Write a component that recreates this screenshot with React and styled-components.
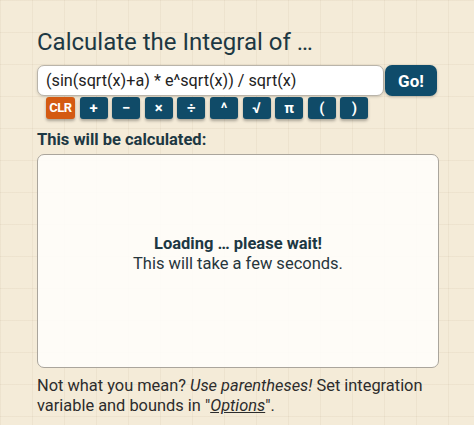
import React from 'react';
import styled, { createGlobalStyle } from 'styled-components';

const GlobalStyle = createGlobalStyle`
  html, body {
    margin: 0;
    padding: 0;
  }
  body {
    background-color: #f4ebd8;
    background-image:
      linear-gradient(rgba(120, 100, 60, 0.06) 1px, transparent 1px),
      linear-gradient(90deg, rgba(120, 100, 60, 0.06) 1px, transparent 1px);
    background-size: 32px 32px;
    font-family: Roboto, "Liberation Sans", sans-serif;
    color: #1d3843;
  }
`;

const Page = styled.div`
  width: 474px;
  height: 425px;
  box-sizing: border-box;
  padding: 28px 35px 0 37px;
  overflow: hidden;
`;

const Title = styled.h1`
  margin: 0 0 8px;
  font-size: 24px;
  font-weight: 400;
  line-height: 29px;
  color: #1d3843;
`;

const InputRow = styled.div`
  display: flex;
  gap: 1px;
`;

const FormulaInput = styled.div`
  flex: none;
  width: 347px;
  height: 31px;
  box-sizing: border-box;
  display: flex;
  align-items: center;
  padding: 0 8px;
  background: #fff;
  border: 1px solid #b9b4aa;
  border-radius: 7px;
  box-shadow: 0 1px 3px rgba(0, 0, 0, 0.15);
  font-size: 16.2px;
  color: #222;
`;

const GoButton = styled.button`
  width: 52px;
  height: 31px;
  border: none;
  border-radius: 7px;
  background: #0f4c6b;
  color: #fff;
  font-family: inherit;
  font-size: 17px;
  font-weight: 700;
  box-shadow: 0 1px 3px rgba(0, 0, 0, 0.25);
  padding: 0;
`;

const KeyRow = styled.div`
  display: flex;
  gap: 4.6px;
  margin: 1px 0 0 9px;
`;

const Key = styled.button`
  width: ${p => (p.$wide ? 29 : 28)}px;
  height: 22px;
  padding: 0;
  border: none;
  border-radius: 3px;
  background: ${p => (p.$danger ? '#d45a12' : '#104b68')};
  color: #fff;
  font-family: inherit;
  font-size: ${p => (p.$wide ? 13 : 15)}px;
  font-weight: 700;
  line-height: 22px;
  letter-spacing: ${p => (p.$wide ? '-0.5px' : '0')};
  box-shadow: 0 2px 3px rgba(0, 0, 0, 0.3);
`;

const SectionLabel = styled.div`
  margin: 11px 0 0;
  font-size: 16.5px;
  font-weight: 700;
  line-height: 19px;
  color: #1d3843;
`;

const ResultBox = styled.div`
  margin-top: 5px;
  width: 402px;
  height: 214px;
  box-sizing: border-box;
  border: 1px solid #aaa59c;
  border-radius: 7px;
  background-color: rgba(255, 255, 253, 0.85);
  display: flex;
  flex-direction: column;
  align-items: center;
  justify-content: center;
  padding-bottom: 14px;
  font-size: 16.5px;
  line-height: 20px;
  color: #27363c;
`;

const LoadingTitle = styled.div`
  font-weight: 700;
  color: #1d3843;
`;

const Note = styled.p`
  margin: 8px 0 0;
  font-size: 16.4px;
  line-height: 20px;
  color: #2c2c2c;

  em a {
    color: inherit;
  }
`;

const keys = ['+', '−', '×', '÷', '^', '√', 'π', '(', ')'];

export default function App() {
  return (
    <Page>
      <GlobalStyle />
      <Title>Calculate the Integral of …</Title>
      <InputRow>
        <FormulaInput>(sin(sqrt(x)+a) * e^sqrt(x)) / sqrt(x)</FormulaInput>
        <GoButton>Go!</GoButton>
      </InputRow>
      <KeyRow>
        <Key $wide $danger>CLR</Key>
        {keys.map(k => (
          <Key key={k}>{k}</Key>
        ))}
      </KeyRow>
      <SectionLabel>This will be calculated:</SectionLabel>
      <ResultBox>
        <LoadingTitle>Loading … please wait!</LoadingTitle>
        <div>This will take a few seconds.</div>
      </ResultBox>
      <Note>
        Not what you mean? <em>Use parentheses!</em> Set integration variable and bounds in "<em><a href="#options">Options</a></em>".
      </Note>
    </Page>
  );
}
